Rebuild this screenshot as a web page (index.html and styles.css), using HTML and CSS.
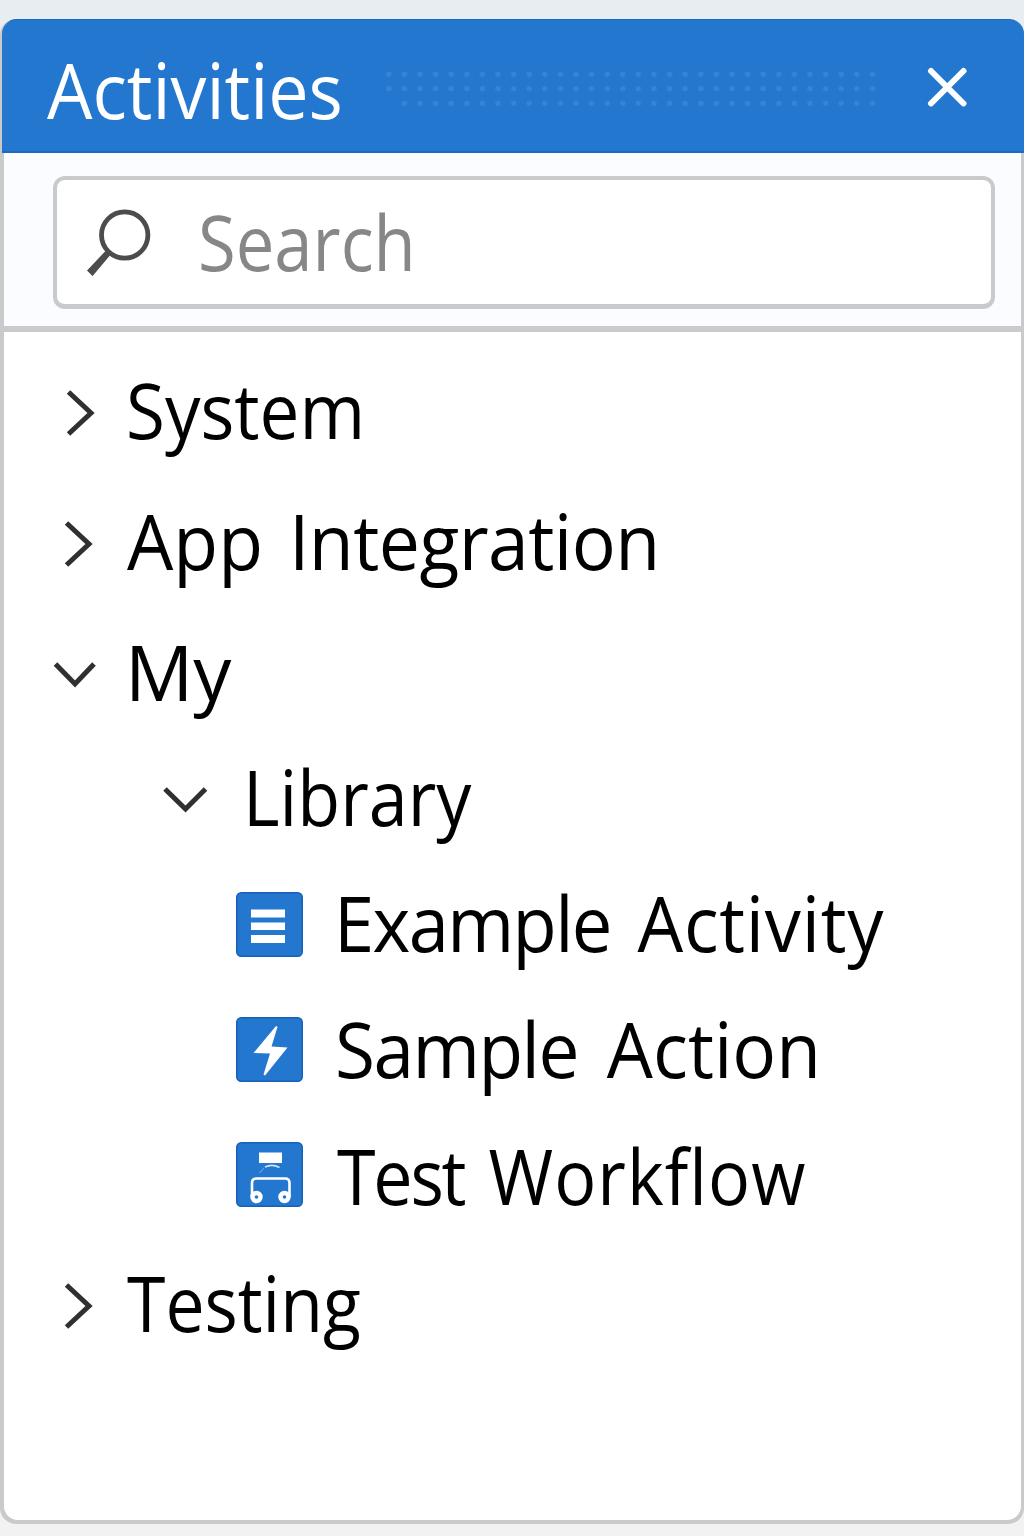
FILE: index.html
```
<!DOCTYPE html>
<html lang="en">
<head>
    <meta charset="UTF-8" />
    <title>Activities</title>
    <link rel="stylesheet" href="styles.css">
</head>
<body>
    <div class="panel">
        <div class="header">
            <h1 class="title">Activities</h1>
            <svg class="grip" width="500" height="44" viewBox="0 0 500 44">
                <defs>
                    <pattern id="dots" width="15.6" height="14.5" patternUnits="userSpaceOnUse">
                        <circle cx="7.8" cy="7.2" r="2.6" fill="#3585d4" />
                    </pattern>
                </defs>
                <rect width="499.2" height="29" fill="url(#dots)" />
                <rect x="15.6" y="29" width="483.6" height="14.5" fill="url(#dots)" />
            </svg>
            <svg class="close" width="40" height="40" viewBox="0 0 40 40">
                <path d="M4 4L36.5 36.5M36.5 4L4 36.5" />
            </svg>
        </div>

        <div class="search-area">
            <div class="searchbar">
                <svg class="search-icon" width="66" height="68" viewBox="0 0 66 68">
                    <circle cx="37.7" cy="27" r="23.2" fill="none" stroke="#4c4c4c" stroke-width="4.8" />
                    <path d="M20.5 42L24 45L5.5 67L1 62.5Z" fill="#4c4c4c" stroke="#4c4c4c" stroke-width="1.5" />
                </svg>
                <span class="placeholder">Search</span>
            </div>
        </div>

        <div class="tree">
            <div class="row">
                <svg class="chevron system-chevron" viewBox="0 0 48 48"><path d="M12.5 3L35 24L12.5 45" /></svg>
                <span class="label system">System</span>
            </div>
            <div class="row spaced">
                <svg class="chevron" viewBox="0 0 48 48"><path d="M12.5 3L35 24L12.5 45" /></svg>
                <span class="label app">App <span class="last">Integration</span></span>
            </div>
            <div class="row spaced">
                <svg class="chevron down" viewBox="0 0 48 48"><path d="M4.5 13L24 33L43 13" /></svg>
                <span class="label my">My</span>
            </div>
            <div class="row level-2">
                <svg class="chevron down" viewBox="0 0 48 48"><path d="M4 13L24.5 33L44.5 13" /></svg>
                <span class="label library">Library</span>
            </div>
            <div class="row level-3">
                <svg class="tile list-tile" viewBox="0 0 67 65">
                    <rect class="tile-bg" x=".75" y=".75" width="65.5" height="63.5" rx="4.5" />
                    <path fill="#fff" d="M15 17.5h34v8H15zM15 30.5h34v7.5H15zM15 43h34v8H15z" />
                </svg>
                <span class="label example">Example <span class="last">Activity</span></span>
            </div>
            <div class="row level-3">
                <svg class="tile" viewBox="0 0 67 65">
                    <rect class="tile-bg" x=".75" y=".75" width="65.5" height="63.5" rx="4.5" />
                    <path fill="#fff" d="M40 9L41.5 10L35.5 29.5L51.5 30.5L29 58.5L27.5 57.5L34 36.5L17.5 36Z" />
                </svg>
                <span class="label sample">Sample <span class="last">Action</span></span>
            </div>
            <div class="row level-3 workflow-row">
                <svg class="tile flow-tile" viewBox="0 0 67 65">
                    <rect class="tile-bg" x=".75" y=".75" width="65.5" height="63.5" rx="4.5" />
                    <rect x="23" y="10.5" width="23" height="10.5" fill="#fff" />
                    <path d="M29 25Q36 21.5 43.5 25.5" fill="none" stroke="#cfe2f6" stroke-width="1.7" />
                    <path d="M28 26L23.5 31" fill="none" stroke="#5b9ade" stroke-width="1.2" />
                    <path d="M16 55V41Q16 36.5 20.5 36.5H49Q53.5 36.5 53.5 41V55" fill="none" stroke="#fff" stroke-width="2.6" />
                    <circle cx="20.5" cy="55" r="4" fill="#2477cf" stroke="#fff" stroke-width="4.4" />
                    <circle cx="48.5" cy="55" r="4" fill="#2477cf" stroke="#fff" stroke-width="4.4" />
                </svg>
                <span class="label workflow">Test <span class="last">Workflow</span></span>
            </div>
            <div class="row">
                <svg class="chevron" viewBox="0 0 48 48"><path d="M12.5 3L35 24L12.5 45" /></svg>
                <span class="label testing">Testing</span>
            </div>
        </div>
    </div>
</body>
</html>
```
FILE: styles.css
```
* {
    margin: 0;
    padding: 0;
    box-sizing: border-box;
}
body {
    width: 1024px;
    height: 1536px;
    padding-top: 19px;
    overflow: hidden;
    background: linear-gradient(#e7edf1 0, #e7edf1 60px, #f2f2f2 1400px);
    font-family: "Open Sans", "Noto Sans", sans-serif;
    font-size: 76px;
    line-height: 126px;
}
svg {
    display: block;
    flex: none;
}

.panel {
    height: 1505px;
    background-color: #cacaca;
    border-radius: 16px;
    display: flex;
    flex-direction: column;
}

.header {
    display: flex;
    align-items: center;
    height: 134px;
    margin-left: 2px;
    padding-left: 45px;
    background-color: #2477cf;
    border-top: 1px solid #2069b8;
    border-bottom: 2px solid #1d6ac4;
    border-radius: 15px 15px 0 0;
}

.title {
    width: 334px;
    font-size: 76px;
    font-weight: 400;
    color: #fff;
    transform: translateY(4px) scaleX(.945);
    transform-origin: left;
}

.grip {
    margin-top: 6px;
}

.close {
    margin-left: 46px;
    margin-top: 2px;
    fill: none;
    stroke: #fff;
    stroke-width: 6;
    stroke-linecap: round;
}

.search-area {
    height: 173px;
    margin: 0 3px 0 4px;
    padding: 23px 26px 0 49px;
    background-color: #fbfcff;
}

.searchbar {
    display: flex;
    align-items: center;
    height: 133px;
    padding-left: 30px;
    background-color: #fff;
    border: 4px solid #c8cacb;
    border-bottom-width: 5px;
    border-radius: 12px;
}

.placeholder {
    margin-left: 45px;
    font-weight: 380;
    color: #878787;
    transform: scaleX(.905);
    transform-origin: left;
}

.tree {
    flex: 1;
    margin: 6px 3px 4px 4px;
    padding: 13px 0 0 47px;
    background-color: #fff;
    border-radius: 0 0 14px 14px;
}

.row {
    display: flex;
    align-items: center;
    height: 126px;
}

.spaced {
    margin-top: 5px;
}

.level-2 {
    margin-top: -1px;
    padding-left: 110px;
}

.level-3 {
    padding-left: 185px;
}

.workflow-row {
    margin: 1px 0;
}

.chevron {
    width: 48px;
    height: 48px;
    margin: 9px 24px 0 3px;
    fill: none;
    stroke: #303030;
    stroke-width: 5;
}

.system-chevron {
    margin-left: 5px;
    margin-right: 22px;
}

.down {
    margin-left: 0;
    margin-right: 27px;
}

.tile {
    width: 67px;
    height: 65px;
    margin-top: 5px;
    margin-right: 32px;
}

.list-tile {
    margin-top: 7px;
}

.flow-tile {
    margin-top: 1px;
}

.tile-bg {
    fill: #2477cf;
    stroke: #1660b8;
    stroke-width: 1.5;
}

.label {
    margin-top: 3px;
    color: #000;
    white-space: nowrap;
    transform-origin: left;
}

/* widths are narrowed a little per label */
.system {
    transform: scaleX(.934);
}

.app {
    word-spacing: 7px;
    transform: translateX(1px) scaleX(.965);
}

.app .last {
    letter-spacing: -.6px;
}

.my {
    transform: translateX(-1px);
}

.library {
    margin-left: 7px;
    transform: scaleX(.922);
}

.example {
    letter-spacing: -1.7px;
    word-spacing: 10px;
    transform: translateX(-1px) scaleX(.951);
}

.example .last {
    letter-spacing: .8px;
}

.sample {
    letter-spacing: -1.6px;
    word-spacing: 12px;
    transform: scaleX(.96);
}

.sample .last {
    letter-spacing: 0;
}

.workflow {
    letter-spacing: -2.4px;
    word-spacing: 9px;
    transform: translateX(2px) scaleX(.921);
}

.workflow .last {
    letter-spacing: 1.1px;
}

.testing {
    transform: translateX(1px) scaleX(.917);
}
```
